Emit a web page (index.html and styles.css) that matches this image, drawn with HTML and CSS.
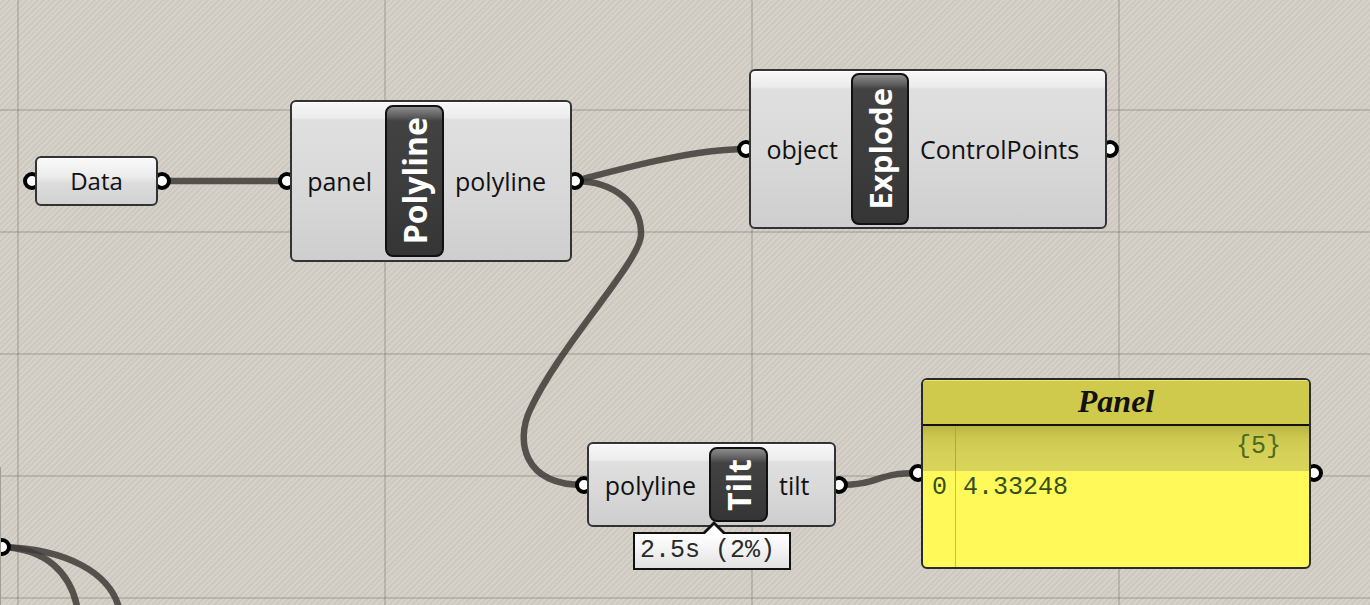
FILE: index.html
```html
<!DOCTYPE html>
<html lang="en">
<head>
  <meta charset="UTF-8" />
  <title>Canvas</title>
  <link rel="stylesheet" href="styles.css">
</head>
<body>
  <div class="canvas">
    <!-- wires and grips -->
    <svg class="wires" width="1370" height="605" viewBox="0 0 1370 605">
      <g class="wire">
        <path d="M162,181 L287,181" />
        <path d="M575,181 C610,172 690,149 746,149" />
        <path d="M575,181 C615,181 642,205 641,235 C640,262 560,345 530,410 C516,440 522,485 584,485" />
        <path d="M839,485 C880,485 875,473 918,473" />
        <path d="M3,547 C45,549 72,572 78,612" />
        <path d="M3,547 C65,549 112,572 120,612" />
      </g>
      <g class="grip">
        <circle cx="32" cy="181" r="7" />
        <circle cx="162" cy="181" r="7" />
        <circle cx="287" cy="181" r="7" />
        <circle cx="575" cy="181" r="7" />
        <circle cx="746" cy="149" r="7" />
        <circle cx="1110" cy="149" r="7" />
        <circle cx="584" cy="485" r="7" />
        <circle cx="839" cy="485" r="7" />
        <circle cx="918" cy="473" r="7" />
        <circle cx="1314" cy="473" r="7" />
        <circle cx="2" cy="547" r="7" />
      </g>
    </svg>

    <div class="stub"></div>

    <div class="param data">Data</div>

    <div class="comp comp-polyline">
      <span class="in">panel</span>
      <span class="cap"><span class="cap-name">Polyline</span></span>
      <span class="out">polyline</span>
    </div>

    <div class="comp comp-explode">
      <span class="in">object</span>
      <span class="cap"><span class="cap-name">Explode</span></span>
      <span class="out">ControlPoints</span>
    </div>

    <div class="comp comp-tilt">
      <span class="in">polyline</span>
      <span class="cap"><span class="cap-name">Tilt</span></span>
      <span class="out">tilt</span>
    </div>

    <div class="tip">2.5s (2%)</div>

    <div class="panel">
      <div class="panel-head">Panel</div>
      <div class="panel-path">
        <span class="idx"></span>
        <span class="path">{5}</span>
      </div>
      <div class="panel-body">
        <span class="idx">0</span>
        <span class="val">4.33248</span>
      </div>
    </div>
  </div>
</body>
</html>
```

FILE: styles.css
```css
* { box-sizing: border-box; margin: 0; padding: 0; }
body {
  width: 1370px;
  height: 605px;
  overflow: hidden;
  background: #d3cfc7;
  font-family: 'Open Sans', 'Noto Sans', sans-serif;
  color: #111;
}
.canvas {
  position: relative;
  width: 1370px;
  height: 605px;
  overflow: hidden;
  background-color: #d3cfc7;
  background-image:
    linear-gradient(to right, rgba(90,85,75,0.22) 2px, transparent 2px),
    linear-gradient(to bottom, rgba(90,85,75,0.22) 2px, transparent 2px),
    repeating-linear-gradient(135deg, #d6d2ca 0, #d6d2ca 2px, #cdc9c1 2px, #cdc9c1 4px);
  background-size: 367px 100%, 100% 122px, auto;
  background-position: 17px 0, 0 109px, 0 0;
}
.wires { position: absolute; left: 0; top: 0; }
.wire path {
  fill: none;
  stroke: rgba(62,60,56,0.85);
  stroke-width: 6.5;
  stroke-linecap: round;
}
.grip circle {
  fill: #fff;
  stroke: #000;
  stroke-width: 4;
}

/* off-screen node edge */
.stub {
  position: absolute;
  left: -60px;
  top: 467px;
  width: 61px;
  height: 160px;
  border-right: 2px solid #a29e97;
}

/* plain parameter */
.param {
  position: absolute;
  border: 2px solid #333;
  border-radius: 6px;
  background: linear-gradient(to bottom, #fafafa 0, #ececec 40%, #dcdcdc 55%, #d2d2d2 100%);
  display: flex;
  align-items: center;
  justify-content: center;
  font-size: 24px;
  box-shadow: inset 0 1px 0 #fff;
}
.data { left: 35px; top: 156px; width: 123px; height: 50px; padding-bottom: 1px; }

/* components */
.comp {
  position: absolute;
  display: grid;
  grid-template-columns: var(--lw) var(--cw) 1fr;
  align-items: center;
  padding: 3px 0;
  border: 2px solid #333;
  border-radius: 6px;
  background: linear-gradient(to bottom, #f7f7f7 0, #ececec 16px, #dfdfdf 18px, #d9d9d9 55%, #cecece 100%);
  box-shadow: inset 0 1px 0 #fff;
  font-size: 25px;
  white-space: nowrap;
}
.comp .in { text-align: right; padding-right: 13px; }
.comp .out { padding-left: 11px; }
.cap {
  align-self: stretch;
  display: flex;
  align-items: center;
  justify-content: center;
  border: 2px solid #111;
  border-radius: 8px;
  background: linear-gradient(to bottom, #8c8c8c 0, #5a5a5a 10px, #424242 14px, #3c3c3c 60%, #353535 100%);
  color: #fff;
}
.cap-name {
  writing-mode: vertical-rl;
  transform: rotate(180deg);
  font-weight: 700;
  font-size: 32px;
  line-height: 1;
}
.comp-polyline { left: 290px; top: 100px; width: 282px; height: 162px; --lw: 93px; --cw: 59px; }
.comp-explode { left: 749px; top: 69px; width: 358px; height: 160px; --lw: 100px; --cw: 58px; padding: 2px 0; }
.comp-explode .cap-name { font-size: 31px; }
.comp-tilt { left: 587px; top: 442px; width: 249px; height: 85px; --lw: 120px; --cw: 59px; }

/* profiler tag */
.tip {
  position: absolute;
  left: 633px;
  top: 532px;
  width: 158px;
  height: 38px;
  border: 2px solid #111;
  background: linear-gradient(to bottom, #ffffff 0, #f2f2f2 50%, #e2e2e2 100%);
  font-family: 'Liberation Mono', 'DejaVu Sans Mono', monospace;
  font-size: 25px;
  line-height: 34px;
  padding-left: 5px;
  color: #2a2a2a;
  white-space: nowrap;
}
.tip::before, .tip::after {
  content: '';
  position: absolute;
  border-style: solid;
  border-color: transparent;
}
.tip::before {
  left: 67px;
  top: -13px;
  border-width: 0 12px 12px 12px;
  border-bottom-color: #111;
}
.tip::after {
  left: 70px;
  top: -9px;
  border-width: 0 9px 9px 9px;
  border-bottom-color: #fff;
}

/* panel */
.panel {
  position: absolute;
  left: 921px;
  top: 378px;
  width: 390px;
  height: 191px;
  border: 2px solid #2a2a2a;
  border-radius: 6px;
  overflow: hidden;
  display: flex;
  flex-direction: column;
  background: #fff95a;
  font-family: 'Liberation Mono', 'DejaVu Sans Mono', monospace;
  font-size: 25px;
  color: #35501a;
}
.panel-head {
  height: 46px;
  border-bottom: 2px solid #111;
  background: #cfca4c;
  box-shadow: inset 0 1px 0 #eae67c;
  font-family: 'Liberation Serif', serif;
  font-weight: 700;
  font-style: italic;
  font-size: 32px;
  color: #111;
  text-align: center;
  line-height: 42px;
}
.panel-path {
  height: 45px;
  display: flex;
  background: linear-gradient(to bottom, #b9b543 0, #cdc850 12px, #d6d158 30px, #d8d35a 100%);
}
.panel-body {
  flex: 1;
  display: flex;
}
.idx {
  width: 33px;
  flex: none;
  border-right: 1px solid #c9c23e;
  padding-left: 9px;
  line-height: 34px;
}
.panel-path .idx { border-right-color: #aea93a; }
.path {
  flex: 1;
  text-align: right;
  padding-right: 28px;
  line-height: 42px;
  color: #4a6a22;
}
.val {
  padding-left: 7px;
  line-height: 34px;
}
```
